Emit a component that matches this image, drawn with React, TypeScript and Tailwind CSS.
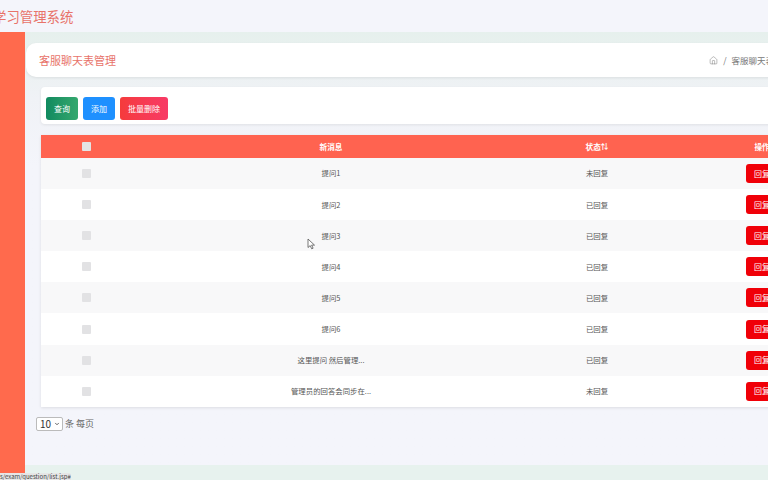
import { ChevronDown, House } from "lucide-react";

const rows = [
  { msg: "提问1", status: "未回复" },
  { msg: "提问2", status: "已回复" },
  { msg: "提问3", status: "已回复" },
  { msg: "提问4", status: "已回复" },
  { msg: "提问5", status: "已回复" },
  { msg: "提问6", status: "已回复" },
  { msg: "这里提问 然后管理...", status: "已回复" },
  { msg: "管理员的回答会同步在...", status: "未回复" },
];

const fontStack = "font-['Noto_Sans_CJK_SC','Liberation_Sans',sans-serif]";

export default function App() {
  return (
    <div className={`relative flex h-[480px] w-[768px] flex-col overflow-hidden bg-[#f4f5fb] ${fontStack}`}>
      {/* top bar */}
      <div className="flex h-8 shrink-0 items-center">
        <span className="ml-[-7px] text-[13.4px] text-[#e8736a]">学习管理系统</span>
      </div>

      <div className="flex min-h-0 flex-1">
        <div className="w-[25px] shrink-0 bg-[#ff6a4d]" />

        <div className="flex min-w-0 flex-1 flex-col bg-gradient-to-b from-[#e6f0ed] via-[#f0f2f6] via-[15%] to-[#f4f5fb] to-[30%]">
          <div className="flex flex-1 flex-col pl-px pt-[11px]">
            {/* title card */}
            <div className="flex h-[34px] w-[780px] shrink-0 items-center justify-between rounded-[10px] bg-white pl-[13px] pr-[15px] shadow-[0_1px_3px_rgba(0,0,0,0.08)]">
              <span className="text-[11px] text-[#e8736a]">客服聊天表管理</span>
              <div className="flex items-center gap-[5px] text-[8.5px] text-[#777]">
                <House size={9} strokeWidth={1.3} />
                <span>/</span>
                <span className="whitespace-nowrap">客服聊天表管理</span>
              </div>
            </div>

            {/* search card */}
            <div className="ml-[15px] mt-[10px] flex h-[37px] w-[760px] shrink-0 gap-[5px] rounded-[4px] bg-white pl-[5px] pt-[10px] shadow-[0_1px_3px_rgba(0,0,0,0.08)]">
              <button className="h-[23px] w-8 rounded-[3px] bg-gradient-to-r from-[#0f8a5f] to-[#34a86e] text-[8px] text-white">查询</button>
              <button className="h-[23px] w-8 rounded-[3px] bg-[#1e90ff] text-[8px] text-white">添加</button>
              <button className="h-[23px] w-12 rounded-[3px] bg-gradient-to-r from-[#f53b3b] to-[#f83a66] text-[8px] text-white">批量删除</button>
            </div>

            {/* table */}
            <div className="ml-[15px] mt-[11px] w-[820px] shrink-0 bg-white shadow-[0_1px_3px_rgba(0,0,0,0.1)]">
              <div className="flex h-[23px] items-center bg-[#ff6350] text-[7.6px] font-bold text-white">
                <div className="flex w-[90px] justify-center">
                  <span className="h-[9px] w-[9px] rounded-[1px] bg-[#e4e4e4]" />
                </div>
                <div className="w-[400px] text-center">新消息</div>
                <div className="w-[132px] text-center">状态⇅</div>
                <div className="w-[198px] text-center">操作</div>
              </div>
              {rows.map((r, i) => (
                <div
                  key={i}
                  className={`flex h-[31.1px] items-center text-[7.4px] text-[#555] ${i % 2 === 0 ? "bg-[#f8f8f9]" : "bg-white"}`}
                >
                  <div className="flex w-[90px] justify-center">
                    <span className="h-[9px] w-[9px] rounded-[1px] bg-[#e2e2e4]" />
                  </div>
                  <div className="w-[400px] pb-px text-center">{r.msg}</div>
                  <div className="w-[132px] pb-px text-center">{r.status}</div>
                  <div className="flex w-[198px] justify-center">
                    <button className="h-[19px] w-8 rounded-[3px] bg-[#f00008] text-[8px] text-white">回复</button>
                  </div>
                </div>
              ))}
            </div>

            {/* page size */}
            <div className="ml-[10px] mt-[10px] flex items-center gap-[2px] text-[9px] text-[#666]">
              <div className="relative h-[14px] w-[27px]">
                <select className="h-full w-full appearance-none rounded-[2px] border border-[#bbb] bg-white pl-[3px] text-[10px] leading-none text-[#333]" defaultValue="10">
                  <option value="10">10</option>
                </select>
                <ChevronDown className="pointer-events-none absolute right-[3px] top-[4px] text-[#333]" size={6} strokeWidth={3} />
              </div>
              <span>条 每页</span>
            </div>
          </div>

          <div className="h-[15px] shrink-0 bg-[#e7f2ee]" />
        </div>
      </div>

      {/* link status bubble */}
      <div className="absolute bottom-0 left-0 h-[7px] w-[71px] overflow-hidden rounded-tr-[2px] bg-[#e6e6e6] text-[6px] leading-[8px] whitespace-nowrap text-[#444]">
        s/exam/question/list.jsp#
      </div>

      {/* mouse cursor */}
      <svg className="absolute left-[307px] top-[238px]" width="9" height="12" viewBox="0 0 9 12">
        <path d="M1 1v8.5l2.2-1.9 1.5 3.2 1.4-.6-1.5-3.1H7.5z" fill="#fff" stroke="#555" strokeWidth="0.8" />
      </svg>
    </div>
  );
}
